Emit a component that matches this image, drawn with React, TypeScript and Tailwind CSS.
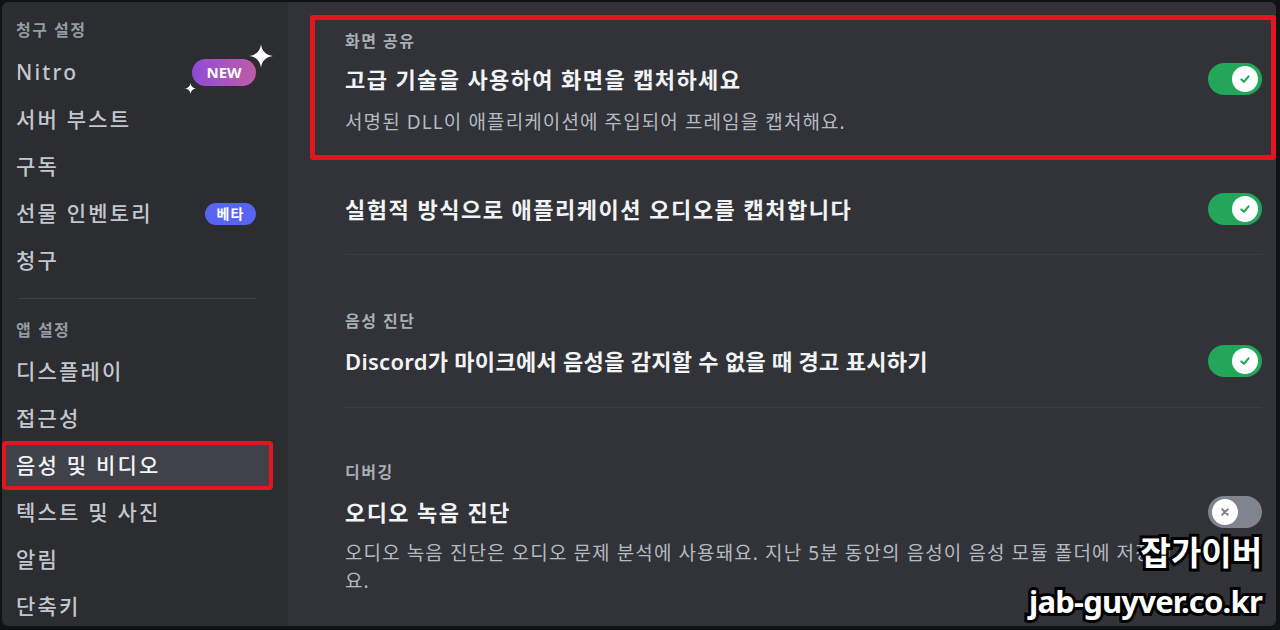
import React from "react";

const font = "font-['Noto_Sans','Noto_Sans_CJK_KR',sans-serif]";

function Sparkle({ className }: { className: string }) {
  return (
    <svg viewBox="0 0 24 24" className={className} fill="white">
      <path d="M12 0C12.6 6.8 17.2 11.4 24 12C17.2 12.6 12.6 17.2 12 24C11.4 17.2 6.8 12.6 0 12C6.8 11.4 11.4 6.8 12 0Z" />
    </svg>
  );
}

function Toggle({ on }: { on: boolean }) {
  if (on) {
    return (
      <div className="flex h-[32px] w-[54px] shrink-0 items-center justify-end rounded-full bg-[#23a55a] px-[4px]">
        <div className="flex h-[26px] w-[26px] items-center justify-center rounded-full bg-white">
          <svg viewBox="0 0 20 20" className="h-[16px] w-[16px]" fill="none" stroke="#23a55a" strokeWidth="2.6" strokeLinecap="round" strokeLinejoin="round">
            <path d="M5.5 10.5L8.7 13.5L14.5 6.8" />
          </svg>
        </div>
      </div>
    );
  }
  return (
    <div className="flex h-[32px] w-[54px] shrink-0 items-center justify-start rounded-full bg-[#80848e] px-[4px]">
      <div className="flex h-[26px] w-[26px] items-center justify-center rounded-full bg-white">
        <svg viewBox="0 0 20 20" className="h-[14px] w-[14px]" fill="none" stroke="#80848e" strokeWidth="2.8" strokeLinecap="round">
          <path d="M6 6L14 14M14 6L6 14" />
        </svg>
      </div>
    </div>
  );
}

function NavItem({ label, children }: { label: string; children?: React.ReactNode }) {
  return (
    <div className="flex h-[47px] items-center justify-between text-[21px] font-medium tracking-[2.2px] text-[#c3c7cd]">
      <span>{label}</span>
      {children}
    </div>
  );
}

function NavHeader({ label }: { label: string }) {
  return <div className="h-[28px] text-[16px] leading-[28px] font-semibold tracking-[1.5px] text-[#949ba4]">{label}</div>;
}

const title = "text-[22px] leading-[32px] font-semibold text-[#f2f3f5]";
const header = "h-[24px] text-[16px] leading-[24px] font-semibold tracking-[1.5px] text-[#a9aeb5]";
const desc = "text-[19px] leading-[28px] tracking-[1.1px] text-[#b5bac1]";

export default function App() {
  return (
    <div className={`relative h-[630px] w-[1280px] bg-[#111214] pt-[2px] pr-[4px] pb-[4px] pl-[2px] ${font}`}>
      <div className="flex h-full overflow-hidden rounded-[6px]">
        {/* sidebar */}
        <div className="w-[286px] shrink-0 bg-[#2b2d31] pt-[14px] pr-[32px] pl-[14px]">
          <NavHeader label="청구 설정" />
          <div className="mt-[5px]">
            <NavItem label="Nitro">
              <div className="relative flex h-[27px] w-[64px] items-center justify-center rounded-full bg-gradient-to-r from-[#9149d8] to-[#c05aa6] text-[15px] font-bold tracking-normal text-white">
                NEW
                <Sparkle className="absolute top-[-15px] right-[-17px] h-[24px] w-[24px]" />
                <Sparkle className="absolute bottom-[-8px] left-[-7px] h-[11px] w-[11px]" />
              </div>
            </NavItem>
            <NavItem label="서버 부스트" />
            <NavItem label="구독" />
            <NavItem label="선물 인벤토리">
              <div className="flex h-[22px] w-[51px] items-center justify-center rounded-full bg-[#5865f2] text-[14px] font-bold tracking-[1px] text-white">
                베타
              </div>
            </NavItem>
            <NavItem label="청구" />
          </div>
          <div className="mt-[14px] ml-[2px] h-px bg-[#3f4147]" />
          <div className="mt-[17px]">
            <NavHeader label="앱 설정" />
          </div>
          <div className="mt-[4px]">
            <NavItem label="디스플레이" />
            <NavItem label="접근성" />
            <div className="-my-px -mr-[17px] -ml-[14px] flex h-[49px] items-center rounded-[4px] border-4 border-[#e3161f] bg-[#404249] pl-[10px] text-[21px] font-medium tracking-[2.2px] text-[#f2f3f5]">
              음성 및 비디오
            </div>
            <NavItem label="텍스트 및 사진" />
            <NavItem label="알림" />
            <NavItem label="단축키" />
          </div>
        </div>

        {/* main */}
        <div className="flex-1 bg-[#313338]">
          <div className="mt-[13px] ml-[22px] rounded-[3px] border-[5px] border-[#e3161f] pt-[9px] pr-[9px] pb-[19px] pl-[30px]">
            <div className={header}>화면 공유</div>
            <div className="mt-[10px] flex h-[32px] items-center justify-between">
              <span className={`${title} tracking-[1.4px]`}>고급 기술을 사용하여 화면을 캡처하세요</span>
              <Toggle on />
            </div>
            <div className={`mt-[13px] ${desc}`}>서명된 DLL이 애플리케이션에 주입되어 프레임을 캡처해요.</div>
          </div>

          <div className="mr-[14px] ml-[57px]">
            <div className="mt-[33px] flex h-[32px] items-center justify-between">
              <span className={`${title} tracking-[1.5px]`}>실험적 방식으로 애플리케이션 오디오를 캡처합니다</span>
              <Toggle on />
            </div>
            <div className="mt-[29px] h-px bg-[#3b3d44]" />

            <div className={`mt-[54px] ${header}`}>음성 진단</div>
            <div className="mt-[12px] flex h-[32px] items-center justify-between">
              <span className={`${title} tracking-[0.3px]`}>Discord가 마이크에서 음성을 감지할 수 없을 때 경고 표시하기</span>
              <Toggle on />
            </div>
            <div className="mt-[30px] h-px bg-[#3b3d44]" />

            <div className={`mt-[52px] ${header}`}>디버깅</div>
            <div className="mt-[12px] flex h-[32px] items-center justify-between">
              <span className={`${title} tracking-[1.4px]`}>오디오 녹음 진단</span>
              <Toggle on={false} />
            </div>
            <div className={`mt-[11px] ${desc}`}>
              오디오 녹음 진단은 오디오 문제 분석에 사용돼요. 지난 5분 동안의 음성이 음성 모듈 폴더에 저장돼
              <br />
              요.
            </div>
          </div>
        </div>
      </div>

      {/* watermark */}
      <div className="absolute right-[18px] bottom-[5px] text-right font-bold text-white [paint-order:stroke_fill] [-webkit-text-stroke:6px_black]">
        <div className="text-[33px] leading-[48px]">잡가이버</div>
        <div className="text-[31px] leading-[48px] tracking-[-0.8px]">jab-guyver.co.kr</div>
      </div>
    </div>
  );
}
